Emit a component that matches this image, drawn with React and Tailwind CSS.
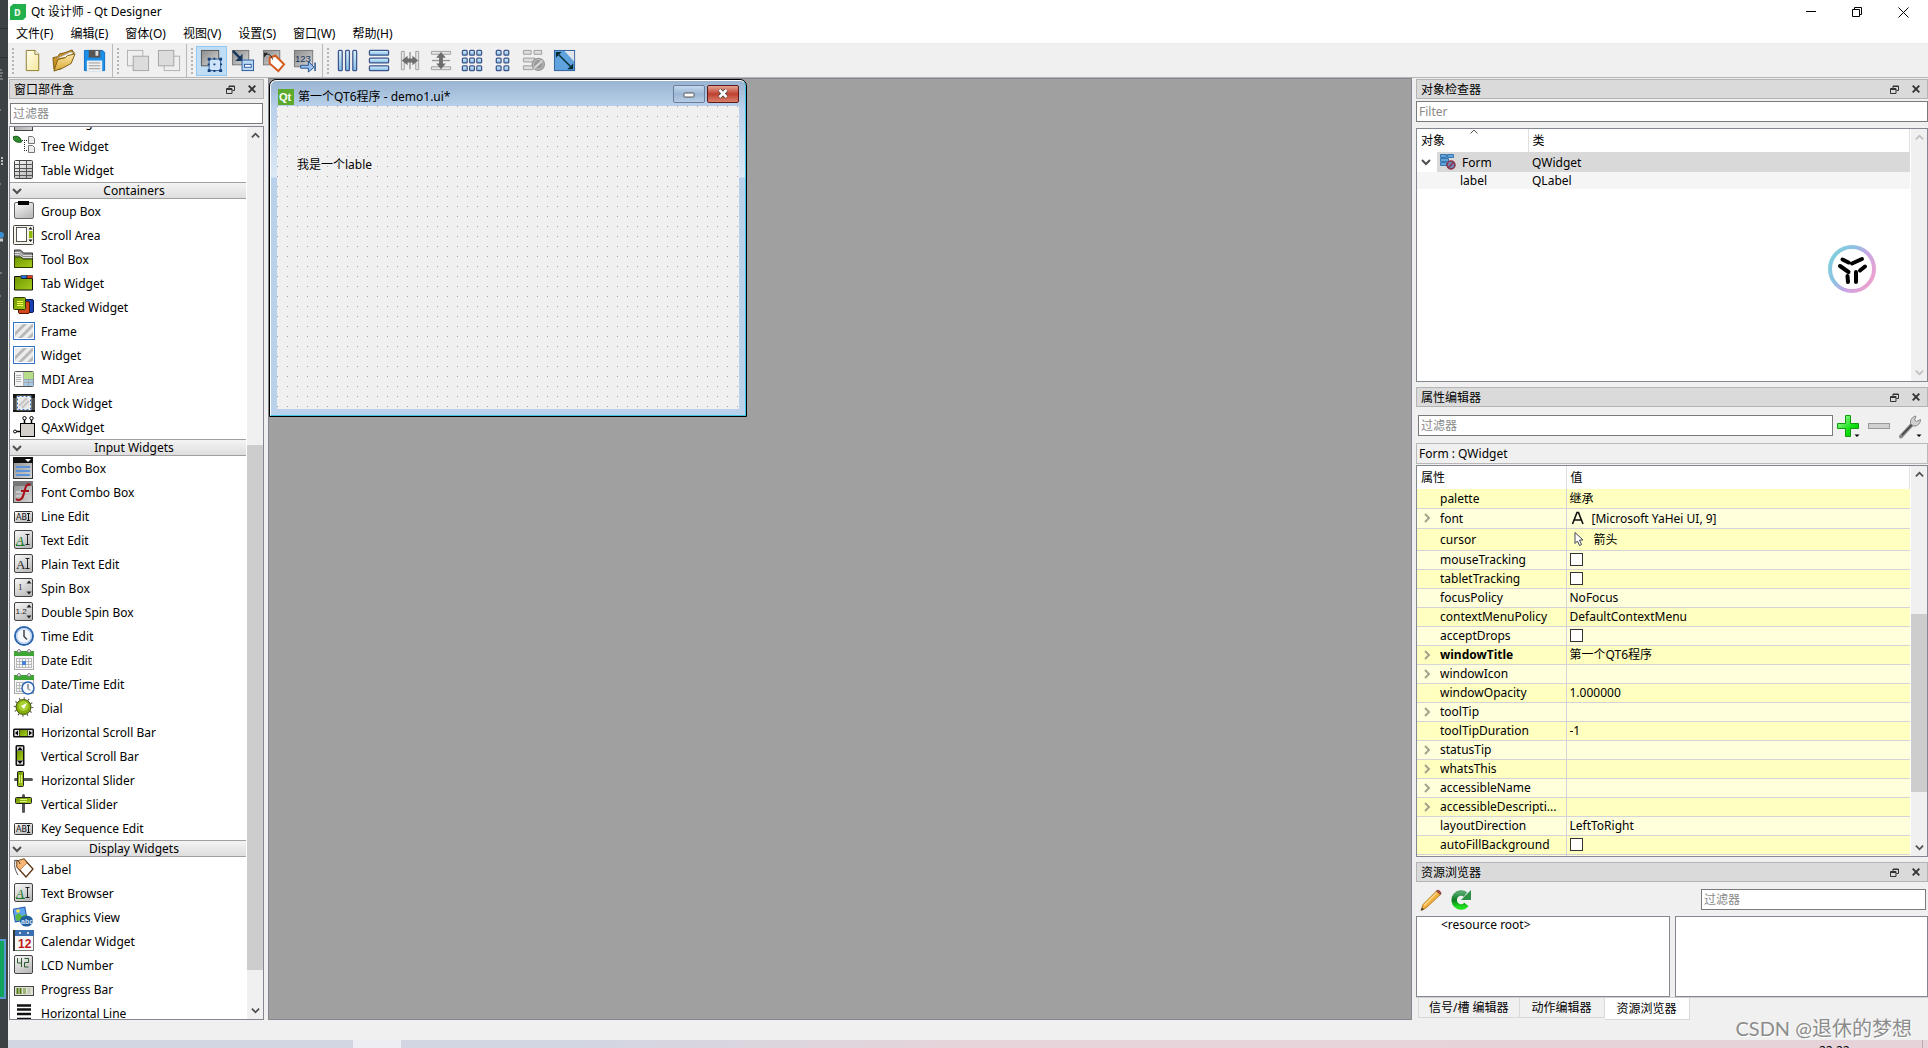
import React, { useState } from "react";

/* ---------- shared bits ---------- */

const Svg = ({ children, size = 22, box = 22, className = "" }) => (
  <svg width={size} height={size} viewBox={`0 0 ${box} ${box}`} className={`shrink-0 ${className}`} aria-hidden="true">
    {children}
  </svg>
);

const Gradients = () => (
  <svg className="absolute w-0 h-0" aria-hidden="true">
    <defs>
      <linearGradient id="gray" x1="0" y1="0" x2="0.6" y2="1">
        <stop offset="0" stopColor="#fafafa" />
        <stop offset="1" stopColor="#bdbdbd" />
      </linearGradient>
      <linearGradient id="darkgray" x1="0" y1="0" x2="1" y2="1">
        <stop offset="0" stopColor="#8c8c8c" />
        <stop offset="1" stopColor="#d6d6d6" />
      </linearGradient>
      <linearGradient id="green" x1="0" y1="0" x2="1" y2="1">
        <stop offset="0" stopColor="#6e9400" />
        <stop offset="1" stopColor="#a6ce1c" />
      </linearGradient>
      <linearGradient id="blue" x1="0" y1="0" x2="0" y2="1">
        <stop offset="0" stopColor="#def2fd" />
        <stop offset="1" stopColor="#7ebce6" />
      </linearGradient>
      <linearGradient id="paper" x1="0" y1="0" x2="1" y2="1">
        <stop offset="0" stopColor="#fffef0" />
        <stop offset="1" stopColor="#f5e79a" />
      </linearGradient>
      <linearGradient id="folder" x1="0" y1="0" x2="0" y2="1">
        <stop offset="0" stopColor="#fbe9a8" />
        <stop offset="1" stopColor="#d9a834" />
      </linearGradient>
      <linearGradient id="plus" x1="0" y1="0" x2="1" y2="1">
        <stop offset="0" stopColor="#b8ffb0" />
        <stop offset="0.6" stopColor="#12e012" />
        <stop offset="1" stopColor="#0bb80b" />
      </linearGradient>
      <linearGradient id="reload" x1="0" y1="0" x2="0" y2="1">
        <stop offset="0" stopColor="#4fa668" />
        <stop offset="0.5" stopColor="#0a7a20" />
        <stop offset="1" stopColor="#1fe01f" />
      </linearGradient>
      <linearGradient id="ring" x1="0" y1="0.2" x2="1" y2="0.8">
        <stop offset="0" stopColor="#7fd0dc" />
        <stop offset="0.35" stopColor="#8fbfe4" />
        <stop offset="0.6" stopColor="#c9a6e4" />
        <stop offset="1" stopColor="#f0a0cc" />
      </linearGradient>
    </defs>
  </svg>
);

const Chevron = ({ dir = "down", color = "#505050", size = 10 }) => {
  const paths = { down: "M1 3l4 4 4-4", up: "M1 7l4-4 4 4", right: "M3 1l4 4-4 4" };
  return (
    <Svg size={size} box={10}>
      <path d={paths[dir]} fill="none" stroke={color} strokeWidth="2" />
    </Svg>
  );
};

const Scrollbar = ({ before = 1, thumb = 0, after = 0, disabled }) => (
  <div className="w-4 shrink-0 bg-[#f0f0f0] flex flex-col items-stretch">
    <button aria-label="Scroll up" className="h-[17px] flex items-center justify-center">
      <Chevron dir="up" color={disabled ? "#bfbfbf" : "#505050"} size={9} />
    </button>
    <div className="flex-1 flex flex-col">
      <div style={{ flexGrow: before }} />
      {thumb > 0 && <div className="bg-[#cdcdcd]" style={{ flexGrow: thumb }} />}
      <div style={{ flexGrow: after }} />
    </div>
    <button aria-label="Scroll down" className="h-[17px] flex items-center justify-center">
      <Chevron dir="down" color={disabled ? "#bfbfbf" : "#505050"} size={9} />
    </button>
  </div>
);

const DockTitle = ({ title }) => (
  <div className="h-5 shrink-0 flex items-center bg-[#dadada] border border-[#b4b4b4] pl-1 pr-px">
    <h2 className="flex-1 pt-0.5">{title}</h2>
    <button aria-label="Float" className="w-[21px] h-4 flex items-center justify-center">
      <Svg size={9} box={9}>
        <path d="M3 3V1h5.500v4.500H6.500M3 1.500h5.500" fill="none" stroke="#333" strokeWidth="1" />
        <path d="M.5 3.500h5.500v5H.5zM.5 4.500h5.500" fill="none" stroke="#333" strokeWidth="1" />
      </Svg>
    </button>
    <button aria-label="Close" className="w-[21px] h-4 flex items-center justify-center">
      <Svg size={8} box={8}>
        <path d="M.7.7l6.600 6.600M7.300.7L.7 7.300" stroke="#333" strokeWidth="1.900" />
      </Svg>
    </button>
  </div>
);

const FilterInput = ({ placeholder = "过滤器", className = "" }) => (
  <input
    type="text"
    aria-label={placeholder}
    placeholder={placeholder}
    className={`h-[21px] bg-white border border-[#7a7a7a] px-0.5 text-xs placeholder:text-[#8a8a8a] outline-none ${className}`}
  />
);

/* ---------- widget icons ---------- */

const Box = () => <rect x="1.500" y="1.500" width="18" height="18" rx="1.500" fill="url(#gray)" stroke="#444" />;

const Stripes = () => (
  <>
    <rect x=".5" y="2.500" width="21" height="17" fill="#fff" stroke="#2f74c8" />
    <rect x="2" y="4" width="18" height="14" fill="#ededed" />
    <path d="M2 12l8-8h4L2 16zM5 18L19 4h1v3L9 18zM14 18l6-6v4l-2 2z" fill="#b8b8b8" />
  </>
);

const Spin = () => <path d="M13.500 6.500h5L16 3.500zM13.500 14.500h5l-2.500 3z" fill="#222" />;

const Abi = () => (
  <>
    <rect x="1.500" y="6.500" width="18" height="11" rx="1" fill="url(#gray)" stroke="#333" />
    <text x="3" y="15" fontSize="8" fontFamily="DejaVu Sans" fill="#111">AB</text>
    <path d="M14 8.500h1.500v7H14M17 8.500h-1.500v7H17" fill="none" stroke="#111" />
  </>
);

const LetterCursor = ({ green }) => (
  <>
    <Box />
    <text x="3" y="15.500" fontSize="13" fontFamily="Liberation Serif" fontStyle={green ? "italic" : "normal"} fill={green ? "#1d7a2b" : "#222"}>A</text>
    {green && <path d="M3 16.500h9" stroke="#1d7a2b" />}
    <path d="M12.500 5.500h4M12.500 15.500h4M14.500 5.500v10" stroke="#222" fill="none" />
  </>
);

const CalendarTop = () => (
  <>
    <rect x="1.500" y="4.500" width="19" height="16" fill="#f7f7f7" stroke="#aaa" />
    <rect x="1" y="2" width="20" height="5" fill="#3fa535" />
    <circle cx="6" cy="2" r="1.500" fill="#eee" stroke="#888" />
    <circle cx="16" cy="2" r="1.500" fill="#eee" stroke="#888" />
    <path d="M3 9.500h16M3 12.500h16M3 15.500h16M3 18.500h16M3.500 9v10M6.500 9v10M9.500 9v10M12.500 9v10M15.500 9v10M18.500 9v10" stroke="#b9b9b9" />
  </>
);

const widgetIcons = {
  list: <rect x="1.500" y="2.500" width="18" height="17" fill="url(#darkgray)" stroke="#444" />,
  tree: (
    <>
      <path d="M0 2c4-2 8 0 8.500 5C4 8 0 6 0 2z" fill="#2e8b2e" stroke="#145214" />
      <path d="M9 5.500h6M11.500 5v11M11 15.500h4" stroke="#222" strokeDasharray="1 1" fill="none" />
      <path d="M15.500 1.500h4l2 2v5h-6zM15.500 10.500h4l2 2v5h-6z" fill="#eee" stroke="#777" />
    </>
  ),
  table: (
    <>
      <rect x="1.500" y="1.500" width="18" height="18" rx="1" fill="url(#gray)" stroke="#444" />
      <path d="M1.500 5.500h18M1.500 9.500h18M1.500 12.500h18M1.500 16.500h18M6.500 1.500v18M13.500 1.500v18" stroke="#555" />
    </>
  ),
  group: (
    <>
      <rect x="1.500" y="2.500" width="19" height="16" rx="1.500" fill="url(#gray)" stroke="#666" />
      <rect x="5" y="1" width="11" height="4" fill="#000" />
    </>
  ),
  scroll: (
    <>
      <rect x=".5" y="1.500" width="20" height="19" rx="1" fill="#f3f3ea" stroke="#444" />
      <rect x="3.500" y="3.500" width="10" height="14" fill="#fff" stroke="#555" />
      <rect x="16" y="7" width="3.500" height="7" fill="#8cb800" />
      <path d="M15.500 5.500h4l-2-2.500zM15.500 15.500h4l-2 2.500z" fill="#111" />
    </>
  ),
  toolbox: (
    <>
      <path d="M1.500 2h6l3 3h9v14.500h-18z" fill="#8f8f8f" stroke="#333" />
      <path d="M1.500 6.500h5l3 3h10M1.500 4.500h5.500l3 3h9.500" stroke="#ddd" fill="none" />
      <path d="M1.500 9h6l3 2h9v8.500h-18z" fill="url(#green)" stroke="#2a3a00" />
    </>
  ),
  tab: (
    <>
      <path d="M1.500 4.500h6l1.500 2h10.500v11.500h-18z" fill="url(#green)" stroke="#111" />
      <rect x="8" y="3.500" width="6" height="3" fill="#1d6fd0" stroke="#111" strokeWidth=".5" />
      <rect x="14" y="3.500" width="5.500" height="3" fill="#e03a1c" stroke="#111" strokeWidth=".5" />
    </>
  ),
  stacked: (
    <>
      <rect x="9.500" y="3.500" width="11" height="13" rx="1.500" fill="#1740b0" stroke="#061a55" />
      <rect x="5.500" y="5.500" width="11" height="12" rx="1.500" fill="#d2481a" stroke="#571500" />
      <rect x=".5" y="1.500" width="12" height="12" rx="1" fill="url(#green)" stroke="#2a3a00" />
      <path d="M4 5.500h6M4 7.500h6M4 9.500h6" stroke="#f5ff50" />
    </>
  ),
  frame: <Stripes />,
  mdi: (
    <>
      <rect x="1.500" y="3.500" width="19" height="15" rx="1" fill="#f4f4f4" stroke="#555" />
      <rect x="11" y="4" width="9.500" height="7" fill="#b7dd8a" />
      <rect x="11" y="11" width="9.500" height="7" fill="#a8c8e4" />
      <path d="M10.500 4v14M11 11.500h9M3 7.500h5M3 9.500h5M3 11.500h5M3 13.500h5M15.500 12v6M11 14.500h9" stroke="#999" strokeWidth=".7" />
    </>
  ),
  dock: (
    <>
      <rect x="0" y="2" width="22" height="18" fill="#151515" />
      <path d="M0 6h22v12H0z" fill="#4a4a4a" />
      <rect x="4.500" y="4.500" width="13" height="13" fill="#e8e8e8" stroke="#fff" strokeWidth="1.500" />
      <rect x="4.500" y="4.500" width="13" height="13" fill="none" stroke="#2f74c8" strokeDasharray="2 2" />
      <path d="M6 14l8-8M9 16l7-7" stroke="#c4c4c4" strokeWidth="2" />
    </>
  ),
  qax: (
    <>
      <rect x="7.500" y="7.500" width="14" height="13" fill="#d3cfca" stroke="#000" />
      <path d="M11.500 7V3M18.500 7V3M7 15.500H3" stroke="#000" strokeWidth="1.500" />
      <circle cx="11.500" cy="2.200" r="1.700" fill="#fff" stroke="#000" />
      <circle cx="18.500" cy="2.200" r="1.700" fill="#fff" stroke="#000" />
      <circle cx="2" cy="15.500" r="1.500" fill="#fff" stroke="#000" />
    </>
  ),
  combo: (
    <>
      <rect x=".5" y=".5" width="19" height="21" fill="url(#darkgray)" stroke="#333" />
      <rect x="0" y="0" width="20" height="6" fill="#111" />
      <path d="M12 2h6l-3 3z" fill="#fff" />
      <path d="M3 10h14M3 14h14M3 18h14" stroke="#5d93d8" strokeWidth="2" />
    </>
  ),
  fontcombo: (
    <>
      <rect x=".5" y=".5" width="19" height="21" fill="url(#darkgray)" stroke="#444" />
      <rect x="0" y="0" width="20" height="5" fill="#777" />
      <path d="M3 11h14M3 15h14" stroke="#c8c8c8" strokeWidth="2" />
      <path d="M17.500 4c-3-2-5 1-6 6s-2 9-6 9c-1 0-2-.5-2-1.500M8 10h8" fill="none" stroke="#a80f18" strokeWidth="2" />
    </>
  ),
  line: <Abi />,
  textedit: <LetterCursor green />,
  plain: <LetterCursor />,
  spin: (
    <>
      <Box />
      <text x="5" y="13" fontSize="9" fontFamily="Liberation Serif" fill="#222">1</text>
      <Spin />
    </>
  ),
  dspin: (
    <>
      <Box />
      <text x="2.500" y="13" fontSize="8" fontFamily="Liberation Sans" fill="#222">1.2</text>
      <Spin />
    </>
  ),
  time: (
    <>
      <circle cx="11" cy="11" r="9" fill="#f5f9fd" stroke="#2c66b0" strokeWidth="2" />
      <circle cx="11" cy="11" r="7.200" fill="none" stroke="#a9c8ea" />
      <path d="M11 5v6.500l3 3" stroke="#444" strokeWidth="1.500" fill="none" />
    </>
  ),
  date: (
    <>
      <CalendarTop />
      <rect x="9" y="12" width="4" height="4" fill="#3f82d8" />
    </>
  ),
  datetime: (
    <>
      <CalendarTop />
      <circle cx="15" cy="15" r="6" fill="#f5f9fd" stroke="#2c66b0" strokeWidth="1.500" />
      <path d="M15 11v4.500l2 2" stroke="#444" fill="none" />
    </>
  ),
  dial: (
    <>
      <circle cx="10.500" cy="10" r="8.800" fill="none" stroke="#444" strokeDasharray="1 3.600" strokeWidth="2" />
      <circle cx="10.500" cy="10" r="7.500" fill="#86ad10" stroke="#3f5400" />
      <circle cx="10.500" cy="9" r="5" fill="#a8d030" />
      <path d="M14 6l-6 3 3 3z" fill="#fff" />
    </>
  ),
  hscroll: (
    <>
      <rect x="0" y="7.500" width="21" height="9" rx="1.500" fill="#111" />
      <rect x="1.500" y="9" width="4.500" height="6" fill="#ddd" />
      <rect x="15" y="9" width="4.500" height="6" fill="#ddd" />
      <rect x="6.500" y="9" width="8" height="6" fill="url(#green)" />
      <path d="M5 9.500v5L2 12zM16 9.500v5l3-2.500z" fill="#000" />
    </>
  ),
  vscroll: (
    <>
      <rect x="2.500" y="0" width="9" height="21" rx="1.500" fill="#111" />
      <rect x="4" y="1.500" width="6" height="4" fill="#ddd" />
      <rect x="4" y="15.500" width="6" height="4" fill="#ddd" />
      <rect x="4" y="6" width="6" height="9" fill="url(#green)" />
      <path d="M4.500 5h5L7 2zM4.500 16h5L7 19z" fill="#000" />
    </>
  ),
  hslider: (
    <>
      <rect x="1" y="9" width="19" height="3" rx="1.500" fill="#555" />
      <rect x="4.500" y="2.500" width="6" height="15" rx="1" fill="url(#green)" stroke="#222" />
      <path d="M6.500 6v8M8.500 6v8" stroke="#e4f28a" />
    </>
  ),
  vslider: (
    <>
      <rect x="9" y="1" width="3" height="19" rx="1.500" fill="#555" />
      <rect x="2.500" y="4.500" width="16" height="6" rx="1" fill="url(#green)" stroke="#222" />
      <path d="M7 6.500h7M7 8.500h7" stroke="#e4f28a" />
    </>
  ),
  label: (
    <>
      <path d="M4 3l7-2 9 10-7 8L4 9z" fill="#fff" stroke="#5b3412" strokeWidth="1.300" />
      <path d="M4 3l7-2 3 4-7 7-3-3z" fill="#f7b877" stroke="#8a5320" strokeWidth=".6" />
      <path d="M1 3c3-2 5 0 6 3M2 3c-1 5 0 9 3 14" fill="none" stroke="#222" strokeWidth=".8" />
    </>
  ),
  graphics: (
    <>
      <rect x="1" y="2" width="12" height="13" fill="#5ea4f2" stroke="#2858a8" transform="rotate(-10 7 8)" />
      <path d="M2 10l4-3 3 3 4-2 1 5-10 2z" fill="#5ab83c" />
      <circle cx="5" cy="5" r="1.800" fill="#ffe04a" />
      <ellipse cx="13.500" cy="15" rx="6.500" ry="5.500" fill="#235f9e" />
      <text x="8" y="18" fontSize="7" fontFamily="Liberation Sans" fontWeight="bold" fill="#cfe2f5">abc</text>
    </>
  ),
  calendar: (
    <>
      <rect x="1.500" y=".5" width="19" height="20" fill="#f8f8f8" stroke="#777" />
      <rect x="1" y="0" width="20" height="6" fill="#3a6fb0" />
      <circle cx="7" cy="3" r="1" fill="#fff" />
      <circle cx="15" cy="3" r="1" fill="#fff" />
      <path d="M1 0v21" stroke="#333" strokeWidth="2" />
      <text x="5" y="18" fontSize="12" fontFamily="Liberation Sans" fontWeight="bold" fill="#c01818">12</text>
    </>
  ),
  lcd: (
    <>
      <Box />
      <path d="M4.500 4v5h4M8.500 4v9M11.500 4.500h4v4h-4v4.500h4" fill="none" stroke="#2d5a2d" />
    </>
  ),
  progress: (
    <>
      <rect x="1.500" y="8.500" width="19" height="9" fill="#e0e0d4" stroke="#444" />
      <path d="M4.500 10v6M7.500 10v6" stroke="#4f7a10" strokeWidth="2" />
      <path d="M11.500 10v6" stroke="#9bb27a" strokeWidth="3" />
      <path d="M16 10v6" stroke="#c3cbb4" strokeWidth="3" />
    </>
  ),
  hline: <path d="M4 3.500h14M4 7.500h14M4 12h14M4 17h14" stroke="#111" strokeWidth="2.500" />,
};

const widgetSections = [
  {
    title: null,
    items: [
      ["list", "List Widget"],
      ["tree", "Tree Widget"],
      ["table", "Table Widget"],
    ],
  },
  {
    title: "Containers",
    items: [
      ["group", "Group Box"],
      ["scroll", "Scroll Area"],
      ["toolbox", "Tool Box"],
      ["tab", "Tab Widget"],
      ["stacked", "Stacked Widget"],
      ["frame", "Frame"],
      ["frame", "Widget"],
      ["mdi", "MDI Area"],
      ["dock", "Dock Widget"],
      ["qax", "QAxWidget"],
    ],
  },
  {
    title: "Input Widgets",
    items: [
      ["combo", "Combo Box"],
      ["fontcombo", "Font Combo Box"],
      ["line", "Line Edit"],
      ["textedit", "Text Edit"],
      ["plain", "Plain Text Edit"],
      ["spin", "Spin Box"],
      ["dspin", "Double Spin Box"],
      ["time", "Time Edit"],
      ["date", "Date Edit"],
      ["datetime", "Date/Time Edit"],
      ["dial", "Dial"],
      ["hscroll", "Horizontal Scroll Bar"],
      ["vscroll", "Vertical Scroll Bar"],
      ["hslider", "Horizontal Slider"],
      ["vslider", "Vertical Slider"],
      ["line", "Key Sequence Edit"],
    ],
  },
  {
    title: "Display Widgets",
    items: [
      ["label", "Label"],
      ["textedit", "Text Browser"],
      ["graphics", "Graphics View"],
      ["calendar", "Calendar Widget"],
      ["lcd", "LCD Number"],
      ["progress", "Progress Bar"],
      ["hline", "Horizontal Line"],
    ],
  },
];

/* ---------- toolbar icons ---------- */

const cells = (cols, rows, x0, w, h, gx, gy, y0) => {
  const out = [];
  for (let r = 0; r < rows; r++)
    for (let c = 0; c < cols; c++)
      out.push(
        <rect key={`${r}-${c}`} x={x0 + c * gx} y={y0 + r * gy} width={w} height={h} rx="1" fill="url(#blue)" stroke="#3d558a" strokeWidth="1.300" />
      );
  return out;
};

const toolIcons = {
  new: (
    <>
      <path d="M5.500 1.500h9l4 4v17h-13z" fill="url(#paper)" stroke="#8d7a2c" />
      <path d="M14.500 1.500v4h4" fill="#fff" stroke="#8d7a2c" />
    </>
  ),
  open: (
    <>
      <path d="M1 9l5-1 2-3 5-1 8-3 2 3-14 17H2z" fill="#c79324" stroke="#7c5a12" />
      <path d="M5 10l14-7 3 1-1 3" fill="#f5f5ee" stroke="#999" strokeWidth=".7" />
      <path d="M2 23l4-12 8-2 2-2 8-2-4 10-9 5z" fill="url(#folder)" stroke="#7c5a12" />
    </>
  ),
  save: (
    <>
      <path d="M1.500 1.500h19l2 2v19h-21z" fill="#1c8fe8" stroke="#0d6fc4" />
      <rect x="6" y="1" width="12" height="8" fill="#555" />
      <rect x="13" y="2" width="3" height="5" fill="#ddd" />
      <rect x="4" y="12" width="16" height="11" fill="#eee" />
      <path d="M6 14.500h12M6 17.500h12M6 20.500h12" stroke="#999" />
    </>
  ),
  back: (
    <>
      <rect x="1.500" y="1.500" width="16" height="16" fill="#efefef" stroke="#b0b0b0" />
      <rect x="7.500" y="7.500" width="16" height="15" fill="#dcdcdc" stroke="#a5a5a5" />
    </>
  ),
  front: (
    <>
      <rect x="7.500" y="7.500" width="16" height="15" fill="#efefef" stroke="#b0b0b0" />
      <rect x="1.500" y="1.500" width="16" height="16" fill="#dcdcdc" stroke="#a5a5a5" />
    </>
  ),
  widgets: (
    <>
      <rect x="1.500" y="1.500" width="18" height="16" fill="url(#darkgray)" stroke="#555" />
      <rect x="9.500" y="10.500" width="12" height="12" fill="#cfe4fb" stroke="#2a5a9a" />
      <path d="M8 9h3v3H8zM20 9h3v3h-3zM8 21h3v3H8zM20 21h3v3h-3zM14 9h2v2h-2zM8 15h2v2H8zM21 15h2v2h-2zM14 22h2v2h-2zM14 15h2v2h-2z" fill="#123d78" />
    </>
  ),
  signals: (
    <>
      <rect x="1.500" y="1.500" width="17" height="15" fill="url(#darkgray)" stroke="#777" />
      <path d="M2 2l8 8" stroke="#17375e" strokeWidth="2.500" />
      <path d="M12 5v7.500H4.500z" fill="#17375e" />
      <rect x="11.500" y="11.500" width="12" height="11" fill="#b9d8f8" stroke="#2a5a9a" />
      <rect x="14" y="16" width="7" height="3" fill="#fff" stroke="#2a5a9a" />
    </>
  ),
  buddies: (
    <>
      <rect x="1.500" y="1.500" width="17" height="15" fill="url(#darkgray)" stroke="#777" />
      <path d="M8 9l6-2 9 9-6 7-9-8z" fill="#fff" stroke="#d4581a" strokeWidth="2" />
      <path d="M4 6c3-2 6 1 7 5" fill="none" stroke="#222" />
      <path d="M2 9V4h4z" fill="#222" />
    </>
  ),
  taborder: (
    <>
      <rect x="1.500" y="1.500" width="19" height="17" fill="url(#darkgray)" stroke="#777" />
      <text x="2" y="14" fontSize="10" fontFamily="Liberation Sans" fill="#17375e">123</text>
      <path d="M8 17h8v-4l6 6-6 5v-4H8z" fill="#9cc2f0" stroke="#20508c" />
      <path d="M23 14v9" stroke="#20508c" strokeWidth="1.500" />
    </>
  ),
  hlayout: cells(3, 1, 2.5, 4, 21, 7.5, 0, 1.5),
  vlayout: cells(1, 3, 2.5, 20, 5, 0, 8, 1.5),
  hsplit: (
    <>
      <path d="M3.500 2.500h3v19h-3zM18.500 2.500h3v19h-3z" fill="#e6e6e6" stroke="#a0a0a0" />
      <path d="M12.500 3v18" stroke="#999" strokeWidth="1.500" />
      <path d="M4 12l6-5v3h5V7l6 5-6 5v-3h-5v3z" fill="#6d6d6d" />
    </>
  ),
  vsplit: (
    <>
      <path d="M2.500 2.500h20v3h-20zM2.500 18.500h20v3h-20z" fill="#e6e6e6" stroke="#a0a0a0" />
      <path d="M3 12h19" stroke="#999" strokeWidth="1.500" />
      <path d="M12.500 3l5 6h-3v6h3l-5 6-5-6h3V9h-3z" fill="#6d6d6d" />
    </>
  ),
  grid: cells(3, 3, 2.5, 5, 5, 7.5, 8, 1.5),
  form: (
    <>
      {cells(1, 3, 5.5, 5, 5, 0, 8, 1.5)}
      {cells(1, 3, 13.5, 5, 5, 0, 8, 1.5)}
    </>
  ),
  breaklayout: (
    <>
      <path d="M1.500 1.500h8v4h-8zM12.500 1.500h8v4h-8zM1.500 9.500h12v4h-12zM1.500 17.500h10v4h-10z" fill="#ddd" stroke="#9c9c9c" />
      <circle cx="17" cy="16" r="7" fill="#999" />
      <path d="M12.500 20l9-8" stroke="#d8d8d8" strokeWidth="2" />
      <circle cx="17" cy="16" r="5" fill="none" stroke="#c4c4c4" />
    </>
  ),
  adjust: (
    <>
      <rect x="1.500" y="1.500" width="21" height="21" fill="#5ea2de" stroke="#2d5f9c" />
      <path d="M12 2h10v11z" fill="#e2e6ea" />
      <path d="M6 6l12 12" stroke="#062b33" strokeWidth="1.500" />
      <path d="M3 3h6l-6 6zM21 21h-6l6-6z" fill="#062b33" />
    </>
  ),
};

const toolbars = [
  [["new", "新建"], ["open", "打开"], ["save", "保存"]],
  [["back", "放到后面"], ["front", "放到前面"]],
  [["widgets", "编辑控件"], ["signals", "编辑信号/槽"], ["buddies", "编辑伙伴"], ["taborder", "编辑Tab顺序"]],
  [
    ["hlayout", "水平布局"],
    ["vlayout", "垂直布局"],
    ["hsplit", "使用分裂器水平布局"],
    ["vsplit", "使用分裂器垂直布局"],
    ["grid", "栅格布局"],
    ["form", "在窗体布局中布局"],
    ["breaklayout", "打破布局"],
    ["adjust", "调整大小"],
  ],
];

const menus = ["文件(F)", "编辑(E)", "窗体(O)", "视图(V)", "设置(S)", "窗口(W)", "帮助(H)"];

/* ---------- header ---------- */

const TitleBar = () => (
  <div className="h-6 flex items-center bg-white pl-0.5 pr-0.5">
    <Svg size={16} box={16}>
      <path d="M3 0h13v13l-3 3H0V3z" fill="#21b04b" />
      <text x="4" y="12" fontSize="11" fontFamily="Liberation Mono" fontWeight="bold" fill="#e9f7ec">D</text>
    </Svg>
    <h1 className="ml-[5px] flex-1">Qt 设计师 - Qt Designer</h1>
    <button aria-label="Minimize" className="w-[46px] h-5 flex items-center justify-center">
      <Svg size={10} box={10}><path d="M0 4.500h10" stroke="#000" /></Svg>
    </button>
    <button aria-label="Restore" className="w-[46px] h-5 flex items-center justify-center">
      <Svg size={10} box={10}><path d="M.5 2.500h7v7h-7zM2.500 2.500v-2h7v7h-2" fill="none" stroke="#000" /></Svg>
    </button>
    <button aria-label="Close" className="w-[46px] h-5 flex items-center justify-center">
      <Svg size={11} box={11}><path d="M.5.5l10 10M10.500.5l-10 10" stroke="#000" /></Svg>
    </button>
  </div>
);

const ToolBars = () => {
  const [active, setActive] = useState("widgets");
  return (
    <div className="h-[34px] flex bg-[#f0f0f0] border-b border-[#b4b4b4]">
      {toolbars.map((tools, i) => (
        <div key={i} className={`flex items-center pl-1 pr-0.5 ${i < 3 ? "border-r border-[#b8b8b8]" : ""}`}>
          <div className="w-0.5 h-[26px] mr-[3px] bg-[linear-gradient(#b5b5b5_50%,transparent_50%)] bg-[size:2px_4px]" />
          {tools.map(([icon, label]) => (
            <button
              key={icon}
              aria-label={label}
              onClick={() => setActive(icon)}
              className={`w-[31px] h-[30px] flex items-center justify-center border ${
                active === icon ? "bg-[#bfddf5] border-[#90c8f6]" : "border-transparent"
              }`}
            >
              <Svg size={24} box={25}>{toolIcons[icon]}</Svg>
            </button>
          ))}
        </div>
      ))}
    </div>
  );
};

/* ---------- widget box ---------- */

const WidgetBox = () => (
  <aside className="w-[260px] shrink-0 flex flex-col pt-px pl-px pr-1">
    <DockTitle title="窗口部件盒" />
    <FilterInput className="mt-1 mx-px shrink-0" />
    <div className="mt-0.5 flex-1 min-h-0 flex bg-white border border-[#828790]">
      <div className="flex-1 min-w-0 overflow-hidden pr-px">
        <div className="-mt-[17px]">
          {widgetSections.map((section, i) => (
            <section key={i}>
              {section.title && (
                <h3 className="h-[17px] flex items-center pl-0.5 border-y border-[#a0a0a0] bg-linear-to-b from-[#f4f4f4] to-[#dedede]">
                  <Chevron />
                  <span className="flex-1 text-center">{section.title}</span>
                </h3>
              )}
              <ul>
                {section.items.map(([icon, label]) => (
                  <li key={label} className="h-6 flex items-center gap-1.5 pl-[3px]">
                    <Svg>{widgetIcons[icon]}</Svg>
                    <span className="pt-0.5">{label}</span>
                  </li>
                ))}
              </ul>
            </section>
          ))}
        </div>
      </div>
      <Scrollbar before={301} thumb={525} after={32} />
    </div>
  </aside>
);

/* ---------- form canvas ---------- */

const FormWindow = () => (
  <div className="w-[478px] border border-black rounded-t-[7px] overflow-hidden">
    <div className="border border-t-white border-l-white border-r-[#3fc4e4] border-b-[#3fc4e4] rounded-t-[6px] px-1.5 pb-1.5 bg-[linear-gradient(#99b4d1_0px,#b9d1ea_26px,#dce8f5_96px,#b9d1ea_97px)]">
      <div className="h-[25px] flex items-end pl-px pb-px">
        <Svg size={16} box={16}>
          <rect width="16" height="16" fill="#5caa2c" />
          <text x="1" y="12" fontSize="11" fontFamily="Liberation Sans" fontWeight="bold" fill="#fff">Qt</text>
        </Svg>
        <span className="ml-1 flex-1 leading-4">第一个QT6程序 - demo1.ui*</span>
        <div className="self-start pt-1 flex gap-0.5">
          <button aria-label="Minimize form" className="w-8 h-[18px] flex items-center justify-center rounded-xs border border-[#6b7f9a] bg-linear-to-b from-[#c4d8ee] via-[#9cb6d4] to-[#b6cde6]">
            <Svg size={12} box={12}><rect x="1" y="5" width="10" height="4" rx=".5" fill="#fff" stroke="#555" /></Svg>
          </button>
          <button aria-label="Close form" className="w-8 h-[18px] flex items-center justify-center rounded-xs border border-[#5c1a18] bg-linear-to-b from-[#e2a294] via-[#bf4030] to-[#d8806c]">
            <Svg size={12} box={12}>
              <path d="M2.500 2l7 7M9.500 2l-7 7" stroke="#444" strokeWidth="4" />
              <path d="M2.500 2l7 7M9.500 2l-7 7" stroke="#fff" strokeWidth="2.500" />
            </Svg>
          </button>
        </div>
      </div>
      <div className="relative h-[303px] bg-[#f0f0f0] bg-[conic-gradient(at_1px_1px,transparent_75%,#a0a0a0_0)] bg-[size:10px_10px]">
        <span className="absolute left-5 top-[51px]">我是一个lable</span>
      </div>
    </div>
  </div>
);

/* ---------- right docks ---------- */

const LayoutIcon = () => (
  <Svg size={16} box={16}>
    <path d="M.5.5h6v3h-6zM7.500.5h6v3h-6zM.5 4.500h8v3h-8zM.5 8.500h6v3h-6z" fill="#5fa5dc" stroke="#3a77ae" />
    <circle cx="11" cy="11" r="4" fill="#6f86b4" stroke="#8a2f45" strokeWidth="1.500" />
    <path d="M8 14l6-6" stroke="#8a2f45" strokeWidth="1.500" />
  </Svg>
);

const ObjectInspector = () => (
  <section className="flex flex-col">
    <DockTitle title="对象检查器" />
    <FilterInput placeholder="Filter" className="mt-0.5" />
    <div className="relative mt-1.5 h-[254px] flex bg-white border border-[#828790]">
      <div className="flex-1 pr-px">
        <table className="w-full table-fixed border-collapse text-left">
          <thead>
            <tr className="h-[23px]">
              <th className="w-[111px] font-normal pl-1 border-r border-[#e0e0e0] relative">
                对象
                <svg width="8" height="5" viewBox="0 0 8 5" className="absolute left-[53px] top-0" aria-hidden="true">
                  <path d="M.5 4.500L4 1l3.500 3.500" fill="none" stroke="#555" />
                </svg>
              </th>
              <th className="font-normal pl-1 border-r border-[#e0e0e0]">类</th>
            </tr>
          </thead>
          <tbody>
            <tr className="h-5">
              <td className="p-0">
                <div className="flex items-center h-5">
                  <span className="w-5 pl-1"><Chevron /></span>
                  <span className="flex-1 h-5 flex items-center bg-[#d9d9d9] pl-[3px]">
                    <LayoutIcon />
                    <span className="ml-1.5 pt-px">Form</span>
                  </span>
                </div>
              </td>
              <td className="p-0 pt-px pl-1 bg-[#d9d9d9]">QWidget</td>
            </tr>
            <tr className="h-[17px] leading-[17px] bg-[#f5f5f5]">
              <td className="p-0 pl-[43px]">label</td>
              <td className="p-0 pl-1">QLabel</td>
            </tr>
          </tbody>
        </table>
      </div>
      <Scrollbar disabled />
      {/* floating assistant badge */}
      <button aria-label="Assistant" className="absolute right-[51px] top-[116px] rounded-full">
        <Svg size={48} box={48}>
          <circle cx="24" cy="24" r="22" fill="#fff" stroke="url(#ring)" strokeWidth="4" />
          <path d="M14.500 14.500l6 3M24 18.500l10-4.500M12 21l8.500 6M32 25.500l5-4M19.500 31l.5 6M28 27v10" stroke="#000" strokeWidth="4" strokeLinecap="round" fill="none" />
        </Svg>
      </button>
    </div>
  </section>
);

const properties = [
  { name: "palette", value: "继承" },
  { name: "font", value: "[Microsoft YaHei UI, 9]", expand: true, icon: "font" },
  { name: "cursor", value: "箭头", icon: "cursor" },
  { name: "mouseTracking", check: true },
  { name: "tabletTracking", check: true },
  { name: "focusPolicy", value: "NoFocus" },
  { name: "contextMenuPolicy", value: "DefaultContextMenu" },
  { name: "acceptDrops", check: true },
  { name: "windowTitle", value: "第一个QT6程序", expand: true, bold: true },
  { name: "windowIcon", expand: true },
  { name: "windowOpacity", value: "1.000000" },
  { name: "toolTip", expand: true },
  { name: "toolTipDuration", value: "-1" },
  { name: "statusTip", expand: true },
  { name: "whatsThis", expand: true },
  { name: "accessibleName", expand: true },
  { name: "accessibleDescripti...", expand: true },
  { name: "layoutDirection", value: "LeftToRight" },
  { name: "autoFillBackground", check: true },
];

const rowHeights = { font: "h-5", cursor: "h-[22px]" };

const PropertyRow = ({ prop, odd }) => (
  <tr className={`${rowHeights[prop.icon] || "h-[19px]"} border-b border-[#d4d4d8] ${odd ? "bg-[#ffffdc]" : "bg-[#ffffbf]"}`}>
    <td className="p-0 border-r border-[#d4d4d8]">
      <div className="flex items-center">
        <span className="w-[23px] shrink-0 pl-[5px]">
          {prop.expand && <Chevron dir="right" color="#a3a38c" />}
        </span>
        <label htmlFor={prop.check ? prop.name : undefined} className={`whitespace-nowrap ${prop.bold ? "font-bold" : ""}`}>
          {prop.name}
        </label>
      </div>
    </td>
    <td className="p-0 pl-[3px]">
      <div className="flex items-center">
        {prop.check && (
          <input id={prop.name} type="checkbox" className="appearance-none w-[13px] h-[13px] bg-white border border-[#333] checked:bg-[#333]" />
        )}
        {prop.icon === "font" && (
          <Svg size={16} box={16} className="mr-1.5">
            <path d="M2.500 14L7 2.500h1.500L13 14M4.500 10h6.500" fill="none" stroke="#111" strokeWidth="1.600" />
          </Svg>
        )}
        {prop.icon === "cursor" && (
          <Svg size={16} box={16} className="mr-2">
            <path d="M5 1.500v11l2.500-2.500 2 4.500 2-1-2-4.500h3.500z" fill="#fff" stroke="#445" />
          </Svg>
        )}
        {prop.value && <span>{prop.value}</span>}
      </div>
    </td>
  </tr>
);

const PropertyEditor = () => (
  <section className="mt-[5px] flex-1 min-h-0 flex flex-col">
    <DockTitle title="属性编辑器" />
    <div className="mt-2 pl-0.5 pr-1.5 h-[22px] shrink-0 flex items-start">
      <FilterInput className="flex-1" />
      <button aria-label="Add dynamic property" className="ml-1">
        <Svg size={23} box={23}>
          <path d="M8.500.5h5v8h8v5h-8v8h-5v-8h-8v-5h8z" fill="url(#plus)" stroke="#109a10" />
          <path d="M17.500 19.500h5l-2.500 2.500z" fill="#000" />
        </Svg>
      </button>
      <button aria-label="Remove dynamic property" className="ml-2">
        <Svg><rect x=".5" y="8.500" width="21" height="5" fill="#d0d0d0" stroke="#9a9a9a" /></Svg>
      </button>
      <button aria-label="Configure property editor" className="ml-2">
        <Svg size={24} box={24}>
          <path d="M3 21.500L14.500 9" stroke="#888" strokeWidth="4" strokeLinecap="round" />
          <path d="M4 20L14.500 9" stroke="#444" strokeWidth="1.500" />
          <path d="M12.500 8.500c-.5-4 2-7 5.500-7.500l-1.500 4 2 1.500 4-2c0 4-3 7-7 6.500z" fill="#d0d0d0" stroke="#888" />
          <path d="M18.500 19.500h5l-2.500 2.500z" fill="#000" />
        </Svg>
      </button>
    </div>
    <div className="mt-1.5 h-[21px] shrink-0 flex items-center border border-[#b8b8b8] pl-0.5">Form : QWidget</div>
    <div className="mt-px flex-1 min-h-0 flex bg-white border border-[#828790]">
      <div className="flex-1 min-w-0 pr-px overflow-hidden">
        <table className="w-full table-fixed border-collapse text-left leading-[17px]">
          <thead>
            <tr className="h-[23px]">
              <th className="w-[149px] p-0 pl-1 font-normal border-r border-[#e0e0e0]">属性</th>
              <th className="p-0 pl-1 font-normal border-r border-[#e0e0e0]">值</th>
            </tr>
          </thead>
          <tbody>
            {properties.map((prop, i) => (
              <PropertyRow key={prop.name} prop={prop} odd={i % 2 === 1} />
            ))}
            <tr className="h-[19px] bg-[#ffffdc]">
              <td className="border-r border-[#d4d4d8]" />
              <td />
            </tr>
          </tbody>
        </table>
      </div>
      <Scrollbar before={131} thumb={178} after={47} />
    </div>
  </section>
);

const ResourceBrowser = () => (
  <section className="mt-[5px] flex flex-col">
    <DockTitle title="资源浏览器" />
    <div className="mt-[7px] pl-1 pr-0.5 h-[22px] flex items-start">
      <button aria-label="Edit resources">
        <Svg>
          <path d="M1 21.500l2-6L16.500 2l4 3.500L6 19z" fill="#f3b13c" stroke="#a86d14" strokeWidth=".8" />
          <path d="M4 16.500L17 3.500" stroke="#fbd98c" strokeWidth="1.500" />
          <path d="M16.500 2c1.500-2 5.500 1 4 3.500z" fill="#b5524a" stroke="#7a3a34" />
          <path d="M1 21.500l1-3 2 2z" fill="#333" />
        </Svg>
      </button>
      <button aria-label="Reload" className="ml-2">
        <Svg>
          <path d="M16.500 15.500a7 7 0 1 1-1-10" fill="none" stroke="url(#reload)" strokeWidth="5.500" />
          <path d="M21 1v10H11z" fill="#2f9048" />
        </Svg>
      </button>
      <FilterInput className="ml-auto w-[225px]" />
    </div>
    <div className="mt-[5px] h-[81px] grid grid-cols-2 gap-[5px]">
      <div className="bg-white border border-[#828790] pl-6">&lt;resource root&gt;</div>
      <div className="bg-white border border-[#828790]" />
    </div>
    <div role="tablist" className="h-[23px] flex items-start pl-0.5 border-t border-[#d0d0d0]">
      <button role="tab" aria-selected="false" className="h-5 px-2.5 border border-t-0 border-[#d9d9d9]">信号/槽 编辑器</button>
      <button role="tab" aria-selected="false" className="h-5 px-3 border border-t-0 border-l-0 border-[#d9d9d9]">动作编辑器</button>
      <button role="tab" aria-selected="true" className="h-[22px] px-3 bg-white border border-t-0 border-l-0 border-[#d9d9d9]">资源浏览器</button>
    </div>
  </section>
);

/* ---------- desktop leftovers around the window ---------- */

const DesktopEdge = () => (
  <div className="w-2 shrink-0 bg-[#3c4244] flex flex-col justify-between overflow-hidden">
    <svg width="8" height="320" viewBox="0 0 8 320" aria-hidden="true">
      <path d="M0 28.500h8M0 57.500h8" stroke="#2e3335" />
      <path d="M0 70h2M0 73h3M0 76h2M0 79h3M0 110h1M0 184h1M0 273h2M0 296h1" stroke="#aaa" />
      <path d="M2 157v2M2 160v2M2 163v2" stroke="#bbb" strokeWidth="2" />
      <circle cx="1" cy="235" r="3" fill="#3a8fd0" />
      <path d="M0 240h3" stroke="#ccc" strokeWidth="3" />
    </svg>
    <div className="h-[60px] mb-[49px] mr-0.5 bg-[#12a35c] border-y-2 border-r-2 border-[#5b9ad0]" />
  </div>
);

const Taskbar = () => (
  <div className="h-2 shrink-0 flex overflow-hidden bg-linear-to-r from-[#d2d6e2] from-30% via-[#e6d4da] via-50% to-[#e5d3d9]">
    <div className="w-[345px]" />
    <div className="w-12 bg-[#eceef4]" />
    <div className="ml-auto mr-[5px] w-[104px] pt-[5px] leading-none border-r border-[#b9a9b0]">22:22</div>
  </div>
);

export default function App() {
  return (
    <div className="relative h-screen flex overflow-hidden bg-[#f0f0f0] text-black text-xs font-['Noto_Sans','Noto_Sans_CJK_SC',sans-serif]">
      <Gradients />
      <DesktopEdge />
      <div className="flex-1 min-w-0 flex flex-col">
        <header className="shrink-0">
          <TitleBar />
          <nav className="h-5 flex items-center gap-[17px] pl-2 bg-white border-b border-[#ececec]">
            {menus.map((menu) => (
              <button key={menu}>{menu}</button>
            ))}
          </nav>
          <ToolBars />
        </header>
        <div className="flex-1 min-h-0 flex">
          <WidgetBox />
          <main className="flex-1 min-w-0 bg-[#a0a0a0] border border-[#828790]">
            <FormWindow />
          </main>
          <div className="w-[516px] shrink-0 flex flex-col pt-px pl-1">
            <ObjectInspector />
            <PropertyEditor />
            <ResourceBrowser />
          </div>
        </div>
        <footer className="h-5 shrink-0" />
        <Taskbar />
      </div>
      <div className="absolute right-4 bottom-1.5 text-xl leading-7 text-[#8c8c8c] font-['Lato','Noto_Sans_CJK_SC',sans-serif] [text-shadow:1px_1px_0_#fff]">
        CSDN @退休的梦想
      </div>
    </div>
  );
}
